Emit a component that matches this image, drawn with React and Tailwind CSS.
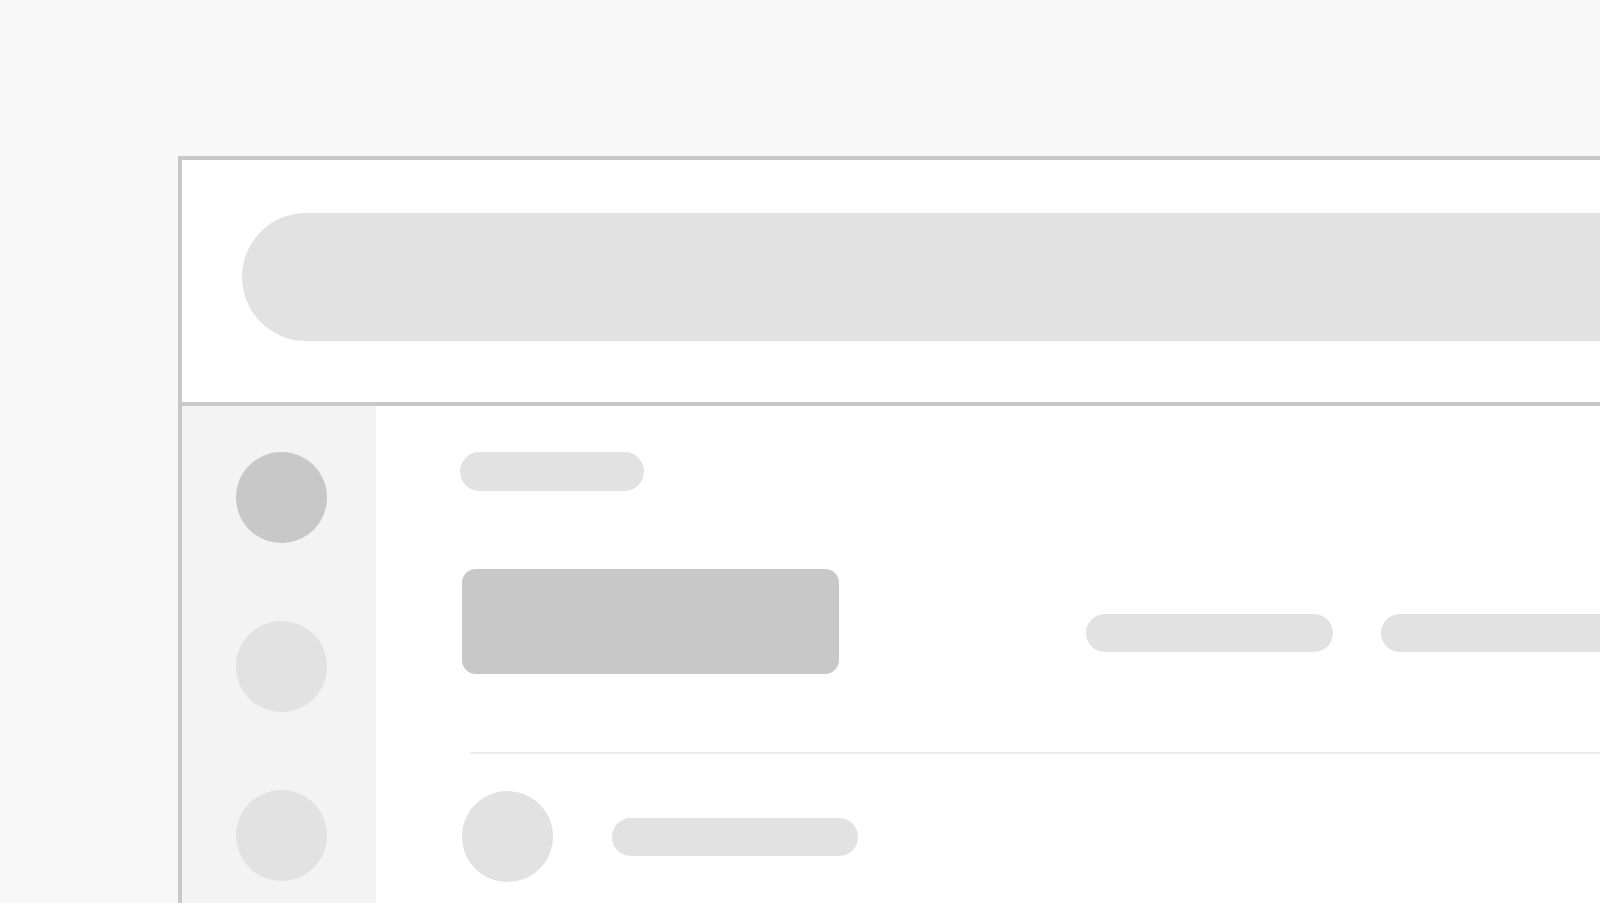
const Pill = ({ className = "" }) => <div className={`rounded-full bg-[#e2e2e2] ${className}`} />;

const App = () => {
  return (
    <div className="h-[903px] w-[1600px] overflow-hidden bg-[#f8f8f8] pl-[178px] pt-[156px]">
      <div className="w-[1500px] border-l-4 border-t-4 border-[#c8c8c8] bg-white">
        <header className="border-b-4 border-[#c8c8c8] pb-[61px] pl-[60px] pt-[53px]">
          <div className="h-[128px] rounded-l-full bg-[#e2e2e2]" />
        </header>

        <div className="flex">
          <aside className="flex h-[520px] w-[194px] shrink-0 flex-col gap-[78px] bg-[#f3f3f3] pl-[54px] pt-[46px]">
            <div className="h-[91px] w-[91px] rounded-full bg-[#c8c8c8]" />
            <div className="h-[91px] w-[91px] rounded-full bg-[#e2e2e2]" />
            <div className="h-[91px] w-[91px] rounded-full bg-[#e2e2e2]" />
          </aside>

          <main className="flex-1 pl-[86px] pt-[46px]">
            <Pill className="-ml-[2px] h-[39px] w-[184px]" />

            <div className="mt-[78px] flex items-start">
              <div className="h-[105px] w-[377px] shrink-0 rounded-[14px] bg-[#c8c8c8]" />
              <div className="ml-[247px] mt-[45px] flex gap-[48px]">
                <Pill className="h-[38px] w-[247px] shrink-0" />
                <Pill className="h-[38px] w-[400px] shrink-0" />
              </div>
            </div>

            <div className="ml-[8px] mt-[78px] h-[2px] bg-[#ececec]" />

            <div className="mt-[37px] flex items-center gap-[59px]">
              <div className="h-[91px] w-[91px] shrink-0 rounded-full bg-[#e2e2e2]" />
              <Pill className="h-[38px] w-[246px]" />
            </div>
          </main>
        </div>
      </div>
    </div>
  );
};

export default App;
